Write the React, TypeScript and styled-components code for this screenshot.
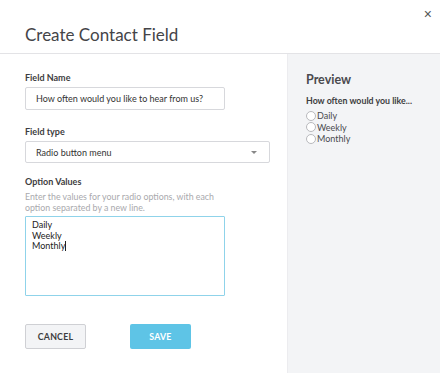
import React from 'react';
import styled, { createGlobalStyle } from 'styled-components';

const GlobalStyle = createGlobalStyle`
  html, body {
    margin: 0;
    padding: 0;
    background: #ffffff;
    font-family: Lato, "Open Sans", Arial, sans-serif;
    color: #3d3d40;
  }
`;

const options = ['Daily', 'Weekly', 'Monthly'];

export default function App() {
  return (
    <>
      <GlobalStyle />
      <Modal>
        <Header>
          <Title>Create Contact Field</Title>
          <Close aria-label='close'>×</Close>
        </Header>
        <Body>
          <FormPane>
            <Label>Field Name</Label>
            <TextInput>How often would you like to hear from us?</TextInput>
            <Label>Field type</Label>
            <Select>
              <span>Radio button menu</span>
              <Caret />
            </Select>
            <Label>Option Values</Label>
            <Hint>
              Enter the values for your radio options, with each option
              separated by a new line.
            </Hint>
            <TextArea>
              <div>Daily</div>
              <div>Weekly</div>
              <div>
                Monthly<Cursor />
              </div>
            </TextArea>
            <Actions>
              <CancelButton>CANCEL</CancelButton>
              <SaveButton>SAVE</SaveButton>
            </Actions>
          </FormPane>
          <PreviewPane>
            <PreviewTitle>Preview</PreviewTitle>
            <PreviewQuestion>How often would you like...</PreviewQuestion>
            {options.map((o) => (
              <RadioRow key={o}>
                <Radio />
                {o}
              </RadioRow>
            ))}
          </PreviewPane>
        </Body>
      </Modal>
    </>
  );
}

const Modal = styled.div`
  width: 440px;
  height: 373px;
  display: flex;
  flex-direction: column;
  overflow: hidden;
`;
const Header = styled.div`
  height: 54px;
  box-sizing: border-box;
  border-bottom: 1px solid #e3e3e6;
  position: relative;
  padding: 24px 0 0 25px;
`;
const Title = styled.h1`
  margin: 0;
  font-size: 17px;
  font-weight: 400;
  color: #444448;
  line-height: 22px;
`;
const Close = styled.span`
  position: absolute;
  top: 6px;
  right: 8px;
  font-size: 14px;
  color: #555;
  font-family: Arial, sans-serif;
`;
const Body = styled.div`
  flex: 1;
  display: grid;
  grid-template-columns: 288px 1fr;
`;
const FormPane = styled.div`
  padding: 17px 0 0 25px;
  border-right: 1px solid #ececef;
  display: flex;
  flex-direction: column;
  align-items: flex-start;
`;
const Label = styled.div`
  font-size: 9px;
  font-weight: 700;
  color: #3d3d40;
  line-height: 14px;
  margin-bottom: 2px;
`;
const Field = styled.div<{ gap: number }>`
  box-sizing: border-box;
  height: 23px;
  border: 1px solid #d7d8dc;
  border-radius: 2px;
  font-size: 9px;
  color: #333;
  display: flex;
  align-items: center;
  margin-bottom: ${(props) => props.gap}px;
`;
const TextInput = styled(Field).attrs({ gap: 15 })`
  width: 200px;
  padding-left: 10px;
`;
const Select = styled(Field).attrs({ gap: 12 })`
  width: 245px;
  height: 22px;
  padding: 0 10px;
  justify-content: space-between;
`;
const Caret = styled.span`
  width: 0;
  height: 0;
  border-left: 3px solid transparent;
  border-right: 3px solid transparent;
  border-top: 3px solid #888;
  margin-right: 2px;
`;
const Hint = styled.div`
  width: 200px;
  font-size: 8.8px;
  line-height: 11px;
  color: #a9a9ad;
  margin: 0 0 3px;
`;
const TextArea = styled.div`
  box-sizing: border-box;
  width: 200px;
  height: 80px;
  border: 1px solid #8fd3ea;
  border-radius: 1px;
  padding: 3px 6px;
  font-size: 9px;
  line-height: 10.5px;
  color: #222;
`;
const Cursor = styled.span`
  display: inline-block;
  width: 1px;
  height: 10px;
  background: #222;
  vertical-align: -2px;
`;
const Actions = styled.div`
  display: flex;
  gap: 44px;
  margin-top: 28px;
`;
const Button = styled.div`
  box-sizing: border-box;
  width: 61px;
  height: 25px;
  border-radius: 2px;
  font-size: 8.8px;
  font-weight: 700;
  letter-spacing: 0.2px;
  display: flex;
  align-items: center;
  justify-content: center;
`;
const CancelButton = styled(Button)`
  background: #f3f4f6;
  border: 1px solid #cfd0d4;
  color: #3d3d40;
`;
const SaveButton = styled(Button)`
  background: #5ec4e6;
  color: #ffffff;
`;
const PreviewPane = styled.div`
  background: #f3f4f6;
  padding: 18px 0 0 18px;
`;
const PreviewTitle = styled.div`
  font-size: 12.5px;
  font-weight: 700;
  color: #4a4a4e;
  line-height: 16px;
  margin-bottom: 7px;
`;
const PreviewQuestion = styled.div`
  font-size: 8.8px;
  font-weight: 700;
  color: #3d3d40;
  line-height: 12px;
  margin-bottom: 3px;
`;
const RadioRow = styled.div`
  display: flex;
  align-items: center;
  font-size: 9px;
  color: #4a4a4e;
  line-height: 11.5px;
`;
const Radio = styled.span`
  box-sizing: border-box;
  width: 10px;
  height: 10px;
  border-radius: 50%;
  border: 1px solid #b8b9bd;
  background: #fff;
  margin-right: 1px;
`;
